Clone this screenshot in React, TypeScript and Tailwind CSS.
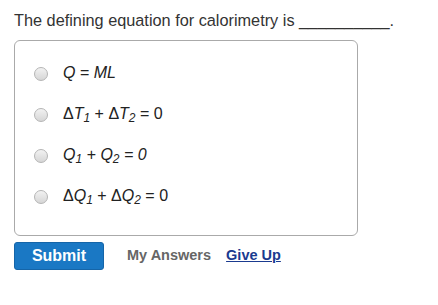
const options = [
  { id: "a", label: (<><i>Q</i> = <i>ML</i></>) },
  { id: "b", label: (<>Δ<i>T</i><sub><i>1</i></sub> + Δ<i>T</i><sub><i>2</i></sub> = 0</>) },
  { id: "c", label: (<i><span>Q</span><sub>1</sub> + Q<sub>2</sub> = 0</i>) },
  { id: "d", label: (<>Δ<i>Q</i><sub><i>1</i></sub> + Δ<i>Q</i><sub><i>2</i></sub> = 0</>) },
];

const Radio = () => (
  <span className="block h-[14px] w-[14px] shrink-0 rounded-full border border-[#b5b5b5] bg-gradient-to-b from-[#f2f2f2] to-[#d6d6d6]" />
);

export default function App() {
  return (
    <div className="h-[305px] w-[438px] bg-white px-[14px] pt-[8px] font-['Liberation_Sans',Arial,sans-serif] text-[#333]">
      <p className="text-[16.3px] leading-[24px]">
        The defining equation for calorimetry is __________.
      </p>
      <div className="mt-[8px] flex h-[196px] w-[344px] flex-col rounded-[6px] border border-[#aaa] pl-[19px] pt-[12px]">
        {options.map((o) => (
          <label key={o.id} className="flex h-[41px] items-center gap-[15px] text-[16px] text-[#222] [&_sub]:text-[12px] [&_sub]:leading-none">
            <Radio />
            <span className="pb-[1px]">{o.label}</span>
          </label>
        ))}
      </div>
      <div className="mt-[6px] flex items-center">
        <button className="h-[28px] w-[90px] rounded-[3px] border border-[#1565a8] bg-[#1a78c4] text-[16px] font-bold text-white">
          Submit
        </button>
        <span className="ml-[23px] text-[14.5px] font-bold text-[#666]">My Answers</span>
        <a className="ml-[15px] text-[14.5px] font-bold text-[#1a3a8f] underline">Give Up</a>
      </div>
    </div>
  );
}
